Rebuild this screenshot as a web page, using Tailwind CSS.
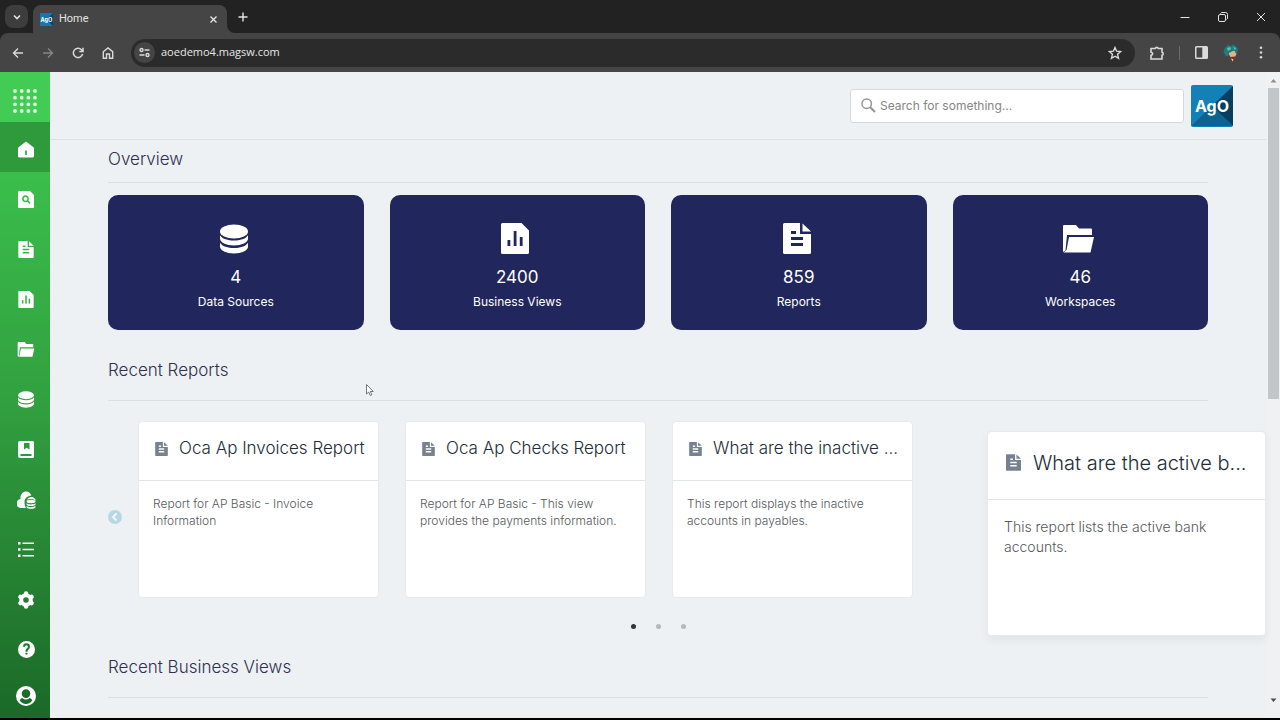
<!DOCTYPE html>
<html lang="en">
<head>
  <meta charset="UTF-8" />
  <meta name="viewport" content="width=device-width, initial-scale=1.0" />
  <title>Home</title>
  <script src="https://cdn.jsdelivr.net/npm/@tailwindcss/browser@4"></script>
</head>
<body class="min-h-screen flex flex-col bg-black font-['Inter',sans-serif] overflow-x-hidden">

  <!-- Icon sprite -->
  <svg class="hidden" aria-hidden="true">
    <symbol id="i-database" viewBox="0 0 28 30">
      <ellipse cx="14" cy="7.5" rx="14" ry="7" />
      <path d="M0 11.2c2.5 4 8 5.2 14 5.2s11.500-1.200 14-5.200v3.600c0 3.700-6.200 6.700-14 6.700S0 18.500 0 14.800z" />
      <path d="M0 18.700c2.500 4 8 5.200 14 5.200s11.500-1.200 14-5.200v4c0 3.700-6.200 6.700-14 6.700S0 26.400 0 22.700z" />
    </symbol>
    <symbol id="i-chart" viewBox="0 0 28 31">
      <path fill-rule="evenodd" d="M1.500 0H20.500L28 7.500V29.500a1.500 1.500 0 0 1-1.500 1.500H1.500A1.500 1.500 0 0 1 0 29.500V1.500A1.500 1.500 0 0 1 1.500 0zM6.500 17v6H9.300v-6zM12.700 8v15h2.800V8zM18.800 14v9h2.800v-9z" />
    </symbol>
    <symbol id="i-report" viewBox="0 0 28 31">
      <path fill-rule="evenodd" d="M1.500 0H17v11h11V29.500a1.500 1.500 0 0 1-1.500 1.500H1.500A1.500 1.500 0 0 1 0 29.500V1.500A1.500 1.500 0 0 1 1.500 0zM8 8v3h5V8zM8 14v3h12v-3zM8 20v3h12v-3z" />
      <path d="M19.500 0.500L28 8.500H19.500z" />
    </symbol>
    <symbol id="i-folder" viewBox="0 0 31 28">
      <path d="M0 1a1 1 0 0 1 1-1h12l3 3.500h12a1 1 0 0 1 1 1V10H4L2.500 25.500 0 27z" />
      <path d="M6 12h25l-3.500 15.500H.500L3.500 25z" />
    </symbol>
    <symbol id="i-search-doc" viewBox="0 0 16 17">
      <path fill-rule="evenodd" d="M1 0H12L16 4V16a1 1 0 0 1-1 1H1a1 1 0 0 1-1-1V1a1 1 0 0 1 1-1zM7.500 4.300a3.500 3.500 0 1 0 1.800 6.500l2.200 2.100 1.100-1.100-2.200-2.200A3.500 3.500 0 0 0 7.500 4.300zM7.500 5.900a1.900 1.900 0 1 1 0 3.800 1.900 1.900 0 0 1 0-3.800z" />
    </symbol>
    <symbol id="i-book" viewBox="0 0 16 17">
      <path fill-rule="evenodd" d="M2 0H14.500A1.500 1.500 0 0 1 16 1.500V15.500A1.500 1.500 0 0 1 14.500 17H2a2 2 0 0 1-2-2V2a2 2 0 0 1 2-2zM6 2v6.500l2.700-1.700 2.800 1.700V2zM2.500 13v2H13.500v-2z" />
    </symbol>
    <symbol id="i-cloud" viewBox="0 0 19 18">
      <path d="M9 17H4.500A4.500 4.500 0 0 1 3.500 8C3 3.500 6 .500 9 .500c2.700 0 4.700 1.700 5.300 4-4 .300-6.800 3-6.800 6.500 0 2.500.500 4.500 1.500 6z" />
      <path d="M10 8.500C11 6.500 13.500 5.500 16 6.200c1.700.700 2.700 2 2.700 3.300-2-1.600-6.200-2-8.700-1z" />
      <ellipse cx="14" cy="10.500" rx="4.500" ry="1.700" />
      <path d="M9.500 12.200c2 1.600 7 1.600 9 0v1.300c-1 2-8 2-9 0zM9.500 15c2 1.500 7 1.500 9 0v1.200c-1 2-8 2-9 0z" />
    </symbol>
    <symbol id="i-list" viewBox="0 0 16 15">
      <path d="M0 0h2.500v2.500H0zM4.500.500H16V2H4.500zM0 6.200h2.500v2.500H0zM4.500 6.700H16v1.500H4.500zM0 12.400h2.500v2.500H0zM4.500 12.900H16v1.500H4.500z" />
    </symbol>
    <symbol id="i-gear" viewBox="0 0 18 18">
      <circle cx="9" cy="9" r="4.800" fill="none" stroke="currentColor" stroke-width="4" />
      <path d="M9 2.500v1M9 14.500v1M3.400 5.800l.800.500M13.800 11.700l.800.500M14.600 5.800l-.800.500M4.200 11.700l-.800.500" fill="none" stroke="currentColor" stroke-width="4.400" stroke-linecap="round" />
    </symbol>
    <symbol id="i-help" viewBox="2 2 20 20">
      <path d="M12 2a10 10 0 1 0 0 20 10 10 0 0 0 0-20zm1.200 16h-2.400v-2.300h2.400zm2.100-7-1 1c-.700.700-1.100 1.300-1.100 2.500h-2.400v-.500c0-1.100.400-2 1.200-2.800l1.200-1.200c.300-.300.500-.700.500-1.200a1.800 1.800 0 0 0-3.600 0H7.900a4.100 4.100 0 0 1 8.200 0c0 .900-.300 1.600-.800 2.200z" />
    </symbol>
    <symbol id="i-user" viewBox="0 0 20 20">
      <path fill-rule="evenodd" d="M10 0a10 10 0 1 1 0 20 10 10 0 0 1 0-20zM10 3.300a4.300 4.300 0 1 0 0 8.600 4.300 4.300 0 0 0 0-8.600zM3.600 14.200c1.400 2.200 3.700 3.700 6.400 3.700s5-1.500 6.400-3.700c-.800-1.200-1.700-1.900-2.700-2.200a5.700 5.700 0 0 1-7.400 0c-1 .300-1.900 1-2.700 2.200z" />
    </symbol>
  </svg>

  <!-- Tab strip -->
  <div class="flex h-[33px] bg-[#222222] text-[#e3e3e3]">
    <button aria-label="Search tabs" class="mt-[5px] ml-[5px] size-[23px] rounded-lg bg-[#3d3d3d] flex items-center justify-center">
      <svg class="size-2" viewBox="0 0 8 8" fill="none" stroke="currentColor" stroke-width="1.600"><path d="M1 2.500l3 3 3-3" /></svg>
    </button>
    <div class="mt-[5px] ml-[5px] w-[194px] flex items-center rounded-t-lg bg-[#454545] pl-[7px] pr-[9px]">
      <svg class="size-[13px]" viewBox="0 0 42 42">
        <rect width="42" height="42" rx="3" fill="#1679ad" />
        <path d="M42 0v42L21 21z" fill="#07456b" />
        <text x="21" y="28" text-anchor="middle" font-size="18" font-weight="700" fill="#fff" font-family="Inter">AgO</text>
      </svg>
      <span class="ml-[6px] flex-1 text-[11px] font-['Roboto',sans-serif]">Home</span>
      <button aria-label="Close tab">
        <svg class="size-[9px]" viewBox="0 0 9 9" stroke="currentColor" stroke-width="1.400"><path d="M1.500 1.500l6 6M7.500 1.500l-6 6" /></svg>
      </button>
    </div>
    <svg class="size-2 self-end text-[#454545]" viewBox="0 0 8 8" fill="currentColor"><path d="M0 0a8 8 0 0 0 8 8H0z" /></svg>
    <button aria-label="New tab" class="ml-[3px]">
      <svg class="size-[10px]" viewBox="0 0 10 10" stroke="currentColor" stroke-width="1.400"><path d="M5 .500v9M.500 5h9" /></svg>
    </button>
    <div class="ml-auto flex items-center gap-7 pr-[14px]">
      <button aria-label="Minimize"><svg class="size-[10px]" viewBox="0 0 10 10" stroke="currentColor"><path d="M.500 5.500h9" /></svg></button>
      <button aria-label="Restore"><svg class="size-[10px]" viewBox="0 0 10 10" fill="none" stroke="currentColor"><rect x=".500" y="2.500" width="7" height="7" rx="1.500" /><path d="M2.500 1.500Q3 .500 4 .500h3.500a2 2 0 0 1 2 2V6q0 1-1 1.500" /></svg></button>
      <button aria-label="Close"><svg class="size-[10px]" viewBox="0 0 10 10" stroke="currentColor"><path d="M1 1l8 8M9 1l-8 8" /></svg></button>
    </div>
  </div>

  <!-- Toolbar -->
  <div class="bg-[#222222]">
    <div class="flex items-center h-[39px] rounded-t-lg bg-[#454545] pl-[12px] pr-[12px] text-[#dadada]">
      <div class="flex gap-[18px]">
        <button aria-label="Back"><svg class="size-3" viewBox="0 0 12 12" fill="none" stroke="currentColor" stroke-width="1.400"><path d="M11 6H1.500M6 1.500L1.500 6 6 10.500" /></svg></button>
        <button aria-label="Forward" class="text-[#858585]"><svg class="size-3" viewBox="0 0 12 12" fill="none" stroke="currentColor" stroke-width="1.400"><path d="M1 6h9.500M6 1.500L10.500 6 6 10.500" /></svg></button>
        <button aria-label="Reload"><svg class="size-3" viewBox="0 0 12 12" fill="none" stroke="currentColor" stroke-width="1.500"><path d="M10.600 7A4.700 4.700 0 1 1 9.500 2.700L11 4.200M11 .800v3.700H7.300" /></svg></button>
        <button aria-label="Home page"><svg class="size-3" viewBox="0 0 12 12" fill="none" stroke="currentColor" stroke-width="1.400"><path d="M1.300 4.700L6 1l4.700 3.700v6.600H7.500V7h-3v4.300H1.300z" /></svg></button>
      </div>
      <div class="ml-[17px] flex-1 flex items-center h-7 rounded-full bg-[#2b2b2b] pl-[3px] pr-[13px]">
        <button aria-label="Site information" class="size-[21px] rounded-full bg-[#454545] flex items-center justify-center">
          <svg class="size-[11px]" viewBox="0 0 11 11" fill="none" stroke="currentColor" stroke-width="1.400"><circle cx="2.500" cy="3" r="1.500" /><path d="M5.500 3H10.500M.500 8H5.500" /><circle cx="8.500" cy="8" r="1.500" /></svg>
        </button>
        <input aria-label="Address" type="text" value="aoedemo4.magsw.com" class="ml-[6px] flex-1 bg-transparent text-[11px] text-[#e8e8e8] font-['Open_Sans',sans-serif] outline-none" />
        <button aria-label="Bookmark"><svg class="size-[14px]" viewBox="0 0 14 14" fill="none" stroke="currentColor" stroke-width="1.400"><path d="M7 1.500l1.600 3.700 4 .400-3 2.700.900 4L7 10.200l-3.500 2.100.900-4-3-2.700 4-.400z" /></svg></button>
      </div>
      <div class="ml-[14px] flex items-center">
        <button aria-label="Extensions"><svg class="size-4" viewBox="0 0 16 16" fill="none" stroke="currentColor" stroke-width="1.600"><path d="M2 3.500h4.200a1.700 1.700 0 0 1 3.200 0H13v3.700a1.600 1.600 0 0 1 0 3.100V14H2v-3.600c2.200-.500 2.200-2.700 0-3.200z" /></svg></button>
        <span class="ml-[14px] w-px h-3.5 bg-[#6b6b6b]"></span>
        <button aria-label="Side panel" class="ml-[15px]"><svg class="size-[13px]" viewBox="0 0 13 13"><path fill="currentColor" fill-rule="evenodd" d="M1.500 0h10A1.500 1.500 0 0 1 13 1.500v10a1.500 1.500 0 0 1-1.500 1.500h-10A1.500 1.500 0 0 1 0 11.500v-10A1.500 1.500 0 0 1 1.500 0zM1.500 1.500v10h5.800v-10z" /></svg></button>
        <button aria-label="Profile" class="ml-[14px]">
          <svg class="size-[18px]" viewBox="0 0 18 18">
            <path d="M5 7l7-1 2.500 4-1.500 3-4 1z" fill="#e9b08f" />
            <path d="M8 13l5-.500 1.500 2.500-3 2.500-2-1.500z" fill="#6b3a2b" />
            <path d="M9 14.500l2.500 1-1 2z" fill="#f3d3bb" />
            <path d="M1.500 8L3 4l3-3 3 1 3-1.500 2.500 2.500 1.500 3-1.500 4-2-3.500-2.500 1-3 1.500-1 3.500-2.500-1z" fill="#1d7f7c" />
            <path d="M5 4l3-1 1 2-3 2zM11 3l3 1-1 2z" fill="#54c4bb" />
          </svg>
        </button>
        <button aria-label="Menu" class="ml-[14px]"><svg class="w-[14px] h-[13px]" viewBox="0 0 14 13" fill="currentColor"><circle cx="7" cy="1.700" r="1.300" /><circle cx="7" cy="6.500" r="1.300" /><circle cx="7" cy="11.300" r="1.300" /></svg></button>
      </div>
    </div>
  </div>

  <div class="flex flex-1 mb-[2px] bg-[#edf1f4]">

    <!-- Sidebar -->
    <nav class="w-[50px] shrink-0 flex flex-col bg-linear-to-b from-[#3ecb50] via-[#32a140] to-[#1b6928] text-white fill-white">
      <a href="#" aria-label="Apps" class="h-[50px] flex items-center justify-center pt-2 bg-[#43cc55]">
        <svg class="size-6" viewBox="0 0 24 24" fill="none" stroke="#dcfbdc" stroke-width="3.800" stroke-linecap="round" stroke-dasharray="0 6.670"><path d="M2 2h20.100M2 8.670h20.100M2 15.340h20.100M2 22h20.100" /></svg>
      </a>
      <a href="#" aria-label="Home" class="h-[50px] flex items-center justify-center pl-[2px] pt-1 bg-[#2f9a3c] border-t border-[#2f9a3c]">
        <svg class="w-4 h-[17px]" viewBox="0 0 16 17"><path fill-rule="evenodd" d="M8 .500l7.500 5.700q.500.400.500 1V15a1.500 1.500 0 0 1-1.500 1.500h-13A1.500 1.500 0 0 1 0 15V7.200q0-.600.500-1zM7.200 9.500V14h1.600V9.500z" /></svg>
      </a>
      <a href="#" aria-label="Search reports" class="h-[50px] flex items-center justify-center pl-[2px] pt-[5px]"><svg class="w-4 h-[17px]"><use href="#i-search-doc" /></svg></a>
      <a href="#" aria-label="Reports" class="h-[50px] flex items-center justify-center pl-[2px] pt-[5px]"><svg class="w-4 h-[17px]"><use href="#i-report" /></svg></a>
      <a href="#" aria-label="Business views" class="h-[50px] flex items-center justify-center pl-[2px] pt-[5px]"><svg class="w-4 h-[17px]"><use href="#i-chart" /></svg></a>
      <a href="#" aria-label="Workspaces" class="h-[50px] flex items-center justify-center pl-[2px] pt-[5px]"><svg class="w-[18px] h-[15px]"><use href="#i-folder" /></svg></a>
      <a href="#" aria-label="Data sources" class="h-[50px] flex items-center justify-center pl-[2px] pt-[5px]"><svg class="w-4 h-[17px]"><use href="#i-database" /></svg></a>
      <a href="#" aria-label="Library" class="h-[50px] flex items-center justify-center pl-[2px] pt-[5px]"><svg class="w-4 h-[17px]"><use href="#i-book" /></svg></a>
      <a href="#" aria-label="Cloud data" class="h-[50px] flex items-center justify-center pl-[2px] pt-[5px]"><svg class="w-[19px] h-[18px]"><use href="#i-cloud" /></svg></a>
      <a href="#" aria-label="Lists" class="h-[50px] flex items-center justify-center pl-[2px] pt-[5px]"><svg class="w-4 h-[15px]"><use href="#i-list" /></svg></a>
      <a href="#" aria-label="Settings" class="h-[50px] flex items-center justify-center pl-[2px] pt-[5px]"><svg class="size-[18px]"><use href="#i-gear" /></svg></a>
      <a href="#" aria-label="Help" class="h-[50px] flex items-center justify-center pl-[2px] pt-[5px]"><svg class="size-[17px]"><use href="#i-help" /></svg></a>
      <a href="#" aria-label="Account" class="mt-auto pb-3 flex justify-center pl-[2px]"><svg class="size-5"><use href="#i-user" /></svg></a>
    </nav>

    <main class="flex-1 min-w-0">
      <!-- Top bar -->
      <header class="flex items-center justify-end gap-[7px] h-[68px] pr-[33px] border-b border-[#dde2e6]">
        <label class="flex items-center w-[334px] h-[34px] rounded-[3px] border border-[#d5d9dc] bg-white pl-[10px]">
          <svg class="size-[15px] text-[#959595]" viewBox="0 0 15 15" fill="none" stroke="currentColor" stroke-width="1.500"><circle cx="5.700" cy="5.700" r="4.700" /><path d="M9.200 9.200L14 14" stroke-width="2" /></svg>
          <input type="search" aria-label="Search" placeholder="Search for something..." class="ml-1 flex-1 text-[12px] leading-5 placeholder:text-[#858585] outline-none" />
        </label>
        <button aria-label="AgO account">
          <svg class="size-[42px]" viewBox="0 0 42 42">
            <rect width="42" height="42" rx="2" fill="#1480b8" />
            <path d="M42 1v40L21 21z" fill="#063f60" />
            <path d="M0 41L21 21 42 41z" fill="#0d628f" />
            <text x="21" y="27" text-anchor="middle" font-size="16" font-weight="700" fill="#fff" font-family="Inter">AgO</text>
          </svg>
        </button>
      </header>

      <div class="px-[58px]">
        <section class="pt-[7px]">
          <h2 class="pb-[11px] border-b border-[#dbe0e4] text-[17px] leading-6 font-light text-[#2f3050]">Overview</h2>
          <div class="mt-3 grid grid-cols-4 gap-[26px] text-white fill-white">
            <a href="#" class="flex flex-col items-center h-[135px] rounded-[10px] bg-[#21275c] pt-7">
              <span class="h-[31px] pr-1 flex items-center"><svg class="w-7 h-[30px]"><use href="#i-database" /></svg></span>
              <span class="mt-[11px] text-[17px] leading-6">4</span>
              <span class="mt-1 text-[12px] leading-[18px]">Data Sources</span>
            </a>
            <a href="#" class="flex flex-col items-center h-[135px] rounded-[10px] bg-[#21275c] pt-7">
              <span class="h-[31px] pr-1 flex items-center"><svg class="w-7 h-[31px]"><use href="#i-chart" /></svg></span>
              <span class="mt-[11px] text-[17px] leading-6">2400</span>
              <span class="mt-1 text-[12px] leading-[18px]">Business Views</span>
            </a>
            <a href="#" class="flex flex-col items-center h-[135px] rounded-[10px] bg-[#21275c] pt-7">
              <span class="h-[31px] pr-1 flex items-center"><svg class="w-7 h-[31px]"><use href="#i-report" /></svg></span>
              <span class="mt-[11px] text-[17px] leading-6">859</span>
              <span class="mt-1 text-[12px] leading-[18px]">Reports</span>
            </a>
            <a href="#" class="flex flex-col items-center h-[135px] rounded-[10px] bg-[#21275c] pt-7">
              <span class="h-[31px] pr-1 flex items-center"><svg class="w-[31px] h-7"><use href="#i-folder" /></svg></span>
              <span class="mt-[11px] text-[17px] leading-6">46</span>
              <span class="mt-1 text-[12px] leading-[18px]">Workspaces</span>
            </a>
          </div>
        </section>

        <section class="pt-7">
          <h2 class="pb-[18px] border-b border-[#dbe0e4] text-[17px] leading-6 font-light text-[#2f3050]">Recent Reports</h2>

          <div class="relative mt-5 flex items-center">
            <button aria-label="Previous reports" class="w-[30px] shrink-0 pt-[15px]">
              <svg class="size-[14px]" viewBox="0 0 14 14"><circle cx="7" cy="7" r="7" fill="#b9d6e4" /><path d="M8.500 3.500L5 7l3.500 3.500" fill="none" stroke="#f4f9fb" stroke-width="1.800" /></svg>
            </button>
            <div class="flex gap-[26px]">
              <article class="w-[241px] min-h-[177px] rounded-sm border border-[#e6eaed] bg-white">
                <h3 class="flex items-center h-[59px] border-b border-[#e3e6e9] pl-4 pb-[5px] text-[17px] text-[#242c36]">
                  <svg class="w-[13px] h-[14px] shrink-0 fill-[#77828e]"><use href="#i-report" /></svg>
                  <span class="ml-[11px] whitespace-nowrap font-light">Oca Ap Invoices Report</span>
                </h3>
                <p class="pt-[14px] pl-[14px] pr-[14px] text-[12px] leading-[17px] font-light text-[#55585b]">Report for AP Basic - Invoice Information</p>
              </article>
              <article class="w-[241px] min-h-[177px] rounded-sm border border-[#e6eaed] bg-white">
                <h3 class="flex items-center h-[59px] border-b border-[#e3e6e9] pl-4 pb-[5px] text-[17px] text-[#242c36]">
                  <svg class="w-[13px] h-[14px] shrink-0 fill-[#77828e]"><use href="#i-report" /></svg>
                  <span class="ml-[11px] whitespace-nowrap font-light">Oca Ap Checks Report</span>
                </h3>
                <p class="pt-[14px] pl-[14px] pr-[14px] text-[12px] leading-[17px] font-light text-[#55585b]">Report for AP Basic - This view provides the payments information.</p>
              </article>
              <article class="w-[241px] min-h-[177px] rounded-sm border border-[#e6eaed] bg-white">
                <h3 class="flex items-center h-[59px] border-b border-[#e3e6e9] pl-4 pb-[5px] text-[17px] text-[#242c36]">
                  <svg class="w-[13px] h-[14px] shrink-0 fill-[#77828e]"><use href="#i-report" /></svg>
                  <span class="ml-[11px] whitespace-nowrap font-light">What are the inactive ...</span>
                </h3>
                <p class="pt-[14px] pl-[14px] pr-[14px] text-[12px] leading-[17px] font-light text-[#55585b]">This report displays the inactive accounts in payables.</p>
              </article>
            </div>

            <!-- Card sliding in from the right -->
            <article class="absolute top-[10px] -right-[58px] w-[279px] h-[205px] rounded-sm border border-[#e6eaed] bg-white shadow-[0_4px_10px_rgba(0,0,0,0.06)]">
              <h3 class="flex items-center h-[68px] border-b border-[#e3e6e9] pl-[18px] pb-[6px] text-[20px] text-[#242c36]">
                <svg class="w-[15px] h-[17px] shrink-0 fill-[#77828e]"><use href="#i-report" /></svg>
                <span class="ml-3 whitespace-nowrap font-light">What are the active b...</span>
              </h3>
              <p class="pt-[17px] pl-4 pr-4 text-[14px] leading-5 font-light text-[#55585b]">This report lists the active bank accounts.</p>
            </article>

            <!-- Mouse pointer -->
            <svg class="absolute -top-[37px] left-[258px] w-2 h-3" viewBox="0 0 8 12" fill="#fff" stroke="#555" stroke-width=".800"><path d="M.500.500v9.500l2.200-2 1.600 3.500 1.500-.700-1.500-3.300h3z" /></svg>
          </div>

          <div class="mt-[26px] flex justify-center gap-5">
            <button aria-label="Page 1" class="size-[5px] rounded-full bg-[#333638]"></button>
            <button aria-label="Page 2" class="size-[5px] rounded-full bg-[#b5b9bc]"></button>
            <button aria-label="Page 3" class="size-[5px] rounded-full bg-[#b5b9bc]"></button>
          </div>
        </section>

        <section class="pt-[26px]">
          <h2 class="pb-[18px] border-b border-[#dbe0e4] text-[17px] leading-6 font-light text-[#2f3050]">Recent Business Views</h2>
        </section>
      </div>
    </main>

    <!-- Scrollbar -->
    <div class="w-[14px] shrink-0 flex flex-col items-center bg-[#f0f1f2]" aria-hidden="true">
      <svg class="w-[7px] h-4 shrink-0" viewBox="0 0 7 16" fill="#8c8f91"><path d="M.500 10.500L3.500 7l3 3.500z" /></svg>
      <div class="flex-[52] w-[11px] bg-[#c3c6c8]"></div>
      <div class="flex-[49]"></div>
      <svg class="w-[7px] h-[26px] shrink-0" viewBox="0 0 7 26" fill="#4d4f50"><path d="M.500 6.500h6l-3 3.500z" /></svg>
    </div>
  </div>

</body>
</html>
